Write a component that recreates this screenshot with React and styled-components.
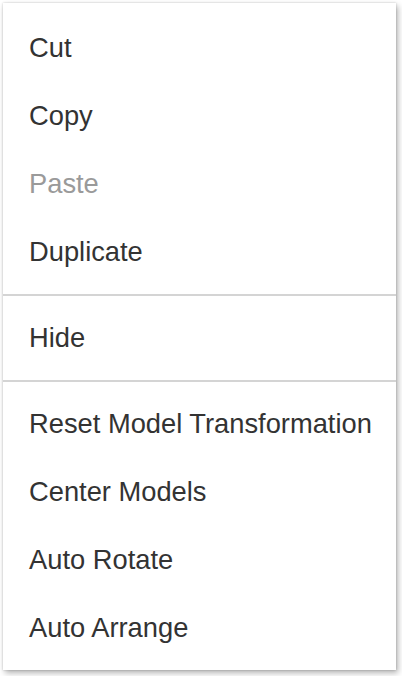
import React from "react";
import styled, { createGlobalStyle } from "styled-components";

const Global = createGlobalStyle`
  html, body { margin: 0; padding: 0; background: #ffffff; }
  body { font-family: "Liberation Sans", Arial, sans-serif; }
`;

const Page = styled.div`
  padding: 3px 6px 5px 3px;
  width: 402px;
  height: 676px;
  box-sizing: border-box;
`;

const Menu = styled.ul`
  list-style: none;
  margin: 0;
  padding: 11px 0 8px;
  width: 393px;
  box-sizing: border-box;
  background: #fff;
  box-shadow: 0 0 2px rgba(0, 0, 0, 0.2), 2px 3px 6px rgba(0, 0, 0, 0.3);
`;

const Item = styled.li`
  height: 68px;
  display: flex;
  align-items: center;
  padding-left: 26px;
  font-size: 27.3px;
  color: ${(p) => (p.$disabled ? "#9a9a9a" : "#333333")};
  white-space: nowrap;
`;

const Separator = styled.li`
  height: 2px;
  margin: 8px 0;
  background: #d4d4d4;
`;

const groups = [
  [
    { label: "Cut" },
    { label: "Copy" },
    { label: "Paste", disabled: true },
    { label: "Duplicate" },
  ],
  [{ label: "Hide" }],
  [
    { label: "Reset Model Transformation" },
    { label: "Center Models" },
    { label: "Auto Rotate" },
    { label: "Auto Arrange" },
  ],
];

export default function App() {
  return (
    <>
      <Global />
      <Page>
        <Menu>
          {groups.map((g, gi) => (
            <React.Fragment key={gi}>
              {gi > 0 && <Separator />}
              {g.map((it) => (
                <Item key={it.label} $disabled={it.disabled}>
                  {it.label}
                </Item>
              ))}
            </React.Fragment>
          ))}
        </Menu>
      </Page>
    </>
  );
}
